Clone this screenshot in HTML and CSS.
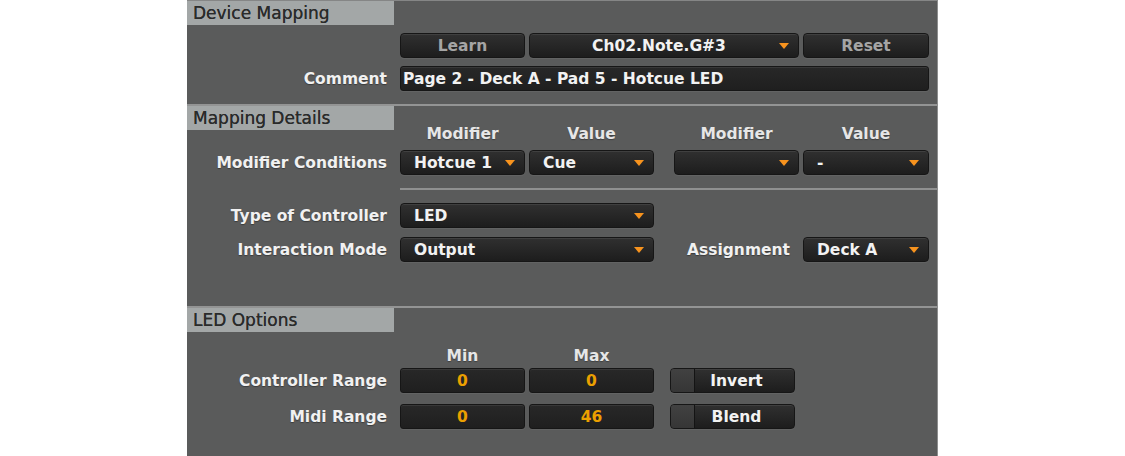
FILE: index.html
```html
<!DOCTYPE html>
<html lang="en">
<head>
  <meta charset="UTF-8" />
  <title>Controller Manager - Mapping</title>
  <link rel="stylesheet" href="styles.css">
</head>
<body>

<div class="panel">

  <!-- Device Mapping -->
  <section class="group group-first">
    <div class="group-title">Device Mapping</div>
    <div class="row row-first">
      <div class="label"></div>
      <div class="ctl btn dim">Learn</div>
      <div class="ctl select centered span-3">
        <span class="value">Ch02.Note.G#3</span><span class="arrow"></span>
      </div>
      <div class="ctl btn dim">Reset</div>
    </div>
    <div class="row">
      <div class="label">Comment</div>
      <div class="ctl field span-all">Page 2 - Deck A - Pad 5 - Hotcue LED</div>
    </div>
  </section>

  <!-- Mapping Details -->
  <section class="group">
    <div class="group-title">Mapping Details</div>
    <div class="row col-heads">
      <div class="label"></div>
      <div class="head">Modifier</div>
      <div class="head">Value</div>
      <div></div>
      <div class="head">Modifier</div>
      <div class="head">Value</div>
    </div>
    <div class="row">
      <div class="label">Modifier Conditions</div>
      <div class="ctl select"><span class="value">Hotcue 1</span><span class="arrow"></span></div>
      <div class="ctl select"><span class="value">Cue</span><span class="arrow"></span></div>
      <div></div>
      <div class="ctl select"><span class="value"></span><span class="arrow"></span></div>
      <div class="ctl select"><span class="value">-</span><span class="arrow"></span></div>
    </div>
    <div class="divider"></div>
    <div class="row row-type">
      <div class="label">Type of Controller</div>
      <div class="ctl select span-2"><span class="value">LED</span><span class="arrow"></span></div>
    </div>
    <div class="row row-mode">
      <div class="label">Interaction Mode</div>
      <div class="ctl select span-2"><span class="value">Output</span><span class="arrow"></span></div>
      <div></div>
      <div class="label sub-label">Assignment</div>
      <div class="ctl select"><span class="value">Deck A</span><span class="arrow"></span></div>
    </div>
  </section>

  <!-- LED Options -->
  <section class="group">
    <div class="group-title">LED Options</div>
    <div class="row range-heads">
      <div class="label"></div>
      <div class="head">Min</div>
      <div class="head">Max</div>
    </div>
    <div class="row row-range">
      <div class="label">Controller Range</div>
      <div class="ctl field number">0</div>
      <div class="ctl field number">0</div>
      <div></div>
      <div class="ctl toggle"><span class="check"></span><span class="toggle-text">Invert</span></div>
    </div>
    <div class="row row-midi">
      <div class="label">Midi Range</div>
      <div class="ctl field number">0</div>
      <div class="ctl field number">46</div>
      <div></div>
      <div class="ctl toggle"><span class="check"></span><span class="toggle-text">Blend</span></div>
    </div>
  </section>

</div>

</body>
</html>
```

FILE: styles.css
```css
body {
  margin: 0;
  background: #fff;
  font-family: "DejaVu Sans", "Liberation Sans", sans-serif;
}

.panel {
  width: 751px;
  height: 456px;
  margin-left: 187px;
  box-sizing: border-box;
  background: #5a5b5b;
  border-top: 1px solid #858686;
  border-right: 1px solid #8d8e8e;
  overflow: hidden;
}

.group {
  border-top: 2px solid #939494;
}

.group-first {
  border-top: none;
  padding-bottom: 13px;
}

.group-title {
  width: 201px;
  height: 24px;
  padding-left: 6px;
  background: #a3a7a7;
  color: #2a2b2b;
  font-size: 17px;
  line-height: 25px;
  text-shadow: 0 0 0.4px #2a2b2b;
}

/* label column + 5 control columns */
.row {
  display: grid;
  grid-template-columns: 209px 125px 125px 12px 125px 126px;
  column-gap: 4px;
  align-items: center;
  margin-top: 8px;
}

.label {
  padding-right: 9px;
  text-align: right;
  color: #f1f1f1;
  font-weight: bold;
  font-size: 15.5px;
  white-space: nowrap;
  text-shadow: 0 1px 1px rgba(0, 0, 0, 0.35);
}

.sub-label {
  grid-column: 5;
  padding-right: 13px;
  margin-right: -4px;
}

.head {
  text-align: center;
  color: #e6e6e6;
  font-weight: bold;
  font-size: 15.5px;
  text-shadow: 0 1px 1px rgba(0, 0, 0, 0.3);
}

.col-heads {
  margin-top: -4px;
  line-height: 16px;
}

.range-heads {
  margin-top: 14px;
  line-height: 20px;
}

.row-type {
  margin-top: 13px;
}

.row-mode {
  margin-top: 9px;
  margin-bottom: 44px;
}

.row-range {
  margin-top: 2px;
}

.row-midi {
  margin-top: 11px;
}

.divider {
  margin: 13px 0 0 213px;
  border-top: 2px solid #8f9090;
}

/* controls */
.ctl {
  height: 25px;
  box-sizing: border-box;
  border: 1px solid #161616;
  border-radius: 4px;
  background: linear-gradient(#303030, #1d1d1d);
  box-shadow: inset 0 1px 0 rgba(255, 255, 255, 0.08), 0 1px 0 rgba(255, 255, 255, 0.05);
  color: #f2f2f2;
  font-weight: bold;
  font-size: 15.5px;
  line-height: 24px;
  white-space: nowrap;
}

.btn {
  text-align: center;
}

.dim {
  color: #a5a5a5;
}

.select {
  display: flex;
  align-items: center;
  padding: 0 9px 0 13px;
}

.select .value {
  flex: 1;
  overflow: hidden;
}

.select.centered .value {
  text-align: center;
  padding-right: 4px;
}

.arrow {
  width: 0;
  height: 0;
  border-left: 5.5px solid transparent;
  border-right: 5.5px solid transparent;
  border-top: 6px solid #f7931e;
}

.field {
  background: linear-gradient(#282828, #1f1f1f);
  border-radius: 3px;
  padding-left: 2px;
}

.number {
  padding-left: 0;
  text-align: center;
  color: #eba000;
}

.span-2 {
  grid-column: span 2;
}

.span-3 {
  grid-column: span 3;
}

.span-all {
  grid-column: span 5;
}

.toggle {
  display: flex;
  width: 125px;
  margin-left: -4px;
  padding: 0;
  overflow: hidden;
}

.toggle .check {
  width: 23px;
  background: linear-gradient(#414141, #363636);
  border-right: 1px solid #141414;
}

.toggle-text {
  flex: 1;
  text-align: center;
  padding-right: 16px;
}
```
